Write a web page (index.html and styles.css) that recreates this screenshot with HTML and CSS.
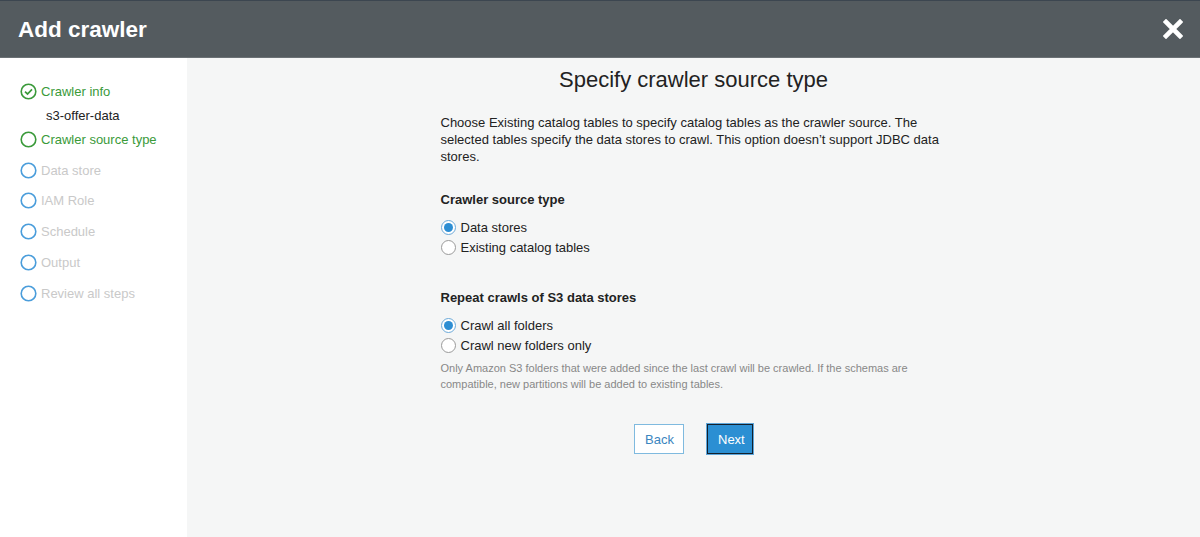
FILE: index.html
```html
<!DOCTYPE html>
<html lang="en">
<head>
    <meta charset="UTF-8">
    <title>Add crawler</title>
    <link rel="stylesheet" href="styles.css">
</head>
<body>
    <div class="modal">
        <div class="modal-header">
            <h1>Add crawler</h1>
            <button class="close-btn" aria-label="Close">
                <svg width="20" height="20" viewBox="0 0 20 20">
                    <path d="M3 3 L17 17 M17 3 L3 17" stroke="#fff" stroke-width="4.6" stroke-linecap="square"/>
                </svg>
            </button>
        </div>

        <div class="modal-body">
            <ul class="steps">
                <li class="step done">
                    <div class="step-row">
                        <svg class="step-icon" width="17" height="17" viewBox="0 0 17 17">
                            <circle cx="8.5" cy="8.5" r="7.3" fill="none" stroke="#3a9a3a" stroke-width="1.6"/>
                            <path d="M5 8.7 L7.5 11 L12 6.3" fill="none" stroke="#3a9a3a" stroke-width="1.7"/>
                        </svg>
                        <span>Crawler info</span>
                    </div>
                    <div class="step-sub">s3-offer-data</div>
                </li>
                <li class="step current">
                    <div class="step-row">
                        <svg class="step-icon" width="17" height="17" viewBox="0 0 17 17">
                            <circle cx="8.5" cy="8.5" r="7.3" fill="none" stroke="#3a9a3a" stroke-width="1.6"/>
                        </svg>
                        <span>Crawler source type</span>
                    </div>
                </li>
                <li class="step">
                    <div class="step-row">
                        <svg class="step-icon" width="17" height="17" viewBox="0 0 17 17"><circle cx="8.5" cy="8.5" r="7.3" fill="none" stroke="#4a9ddb" stroke-width="1.6"/></svg>
                        <span>Data store</span>
                    </div>
                </li>
                <li class="step">
                    <div class="step-row">
                        <svg class="step-icon" width="17" height="17" viewBox="0 0 17 17"><circle cx="8.5" cy="8.5" r="7.3" fill="none" stroke="#4a9ddb" stroke-width="1.6"/></svg>
                        <span>IAM Role</span>
                    </div>
                </li>
                <li class="step">
                    <div class="step-row">
                        <svg class="step-icon" width="17" height="17" viewBox="0 0 17 17"><circle cx="8.5" cy="8.5" r="7.3" fill="none" stroke="#4a9ddb" stroke-width="1.6"/></svg>
                        <span>Schedule</span>
                    </div>
                </li>
                <li class="step">
                    <div class="step-row">
                        <svg class="step-icon" width="17" height="17" viewBox="0 0 17 17"><circle cx="8.5" cy="8.5" r="7.3" fill="none" stroke="#4a9ddb" stroke-width="1.6"/></svg>
                        <span>Output</span>
                    </div>
                </li>
                <li class="step">
                    <div class="step-row">
                        <svg class="step-icon" width="17" height="17" viewBox="0 0 17 17"><circle cx="8.5" cy="8.5" r="7.3" fill="none" stroke="#4a9ddb" stroke-width="1.6"/></svg>
                        <span>Review all steps</span>
                    </div>
                </li>
            </ul>

            <div class="content">
                <h2>Specify crawler source type</h2>
                <div class="form">
                    <p class="intro">Choose Existing catalog tables to specify catalog tables as the crawler source. The selected tables specify the data stores to crawl. This option doesn’t support JDBC data stores.</p>

                    <div class="field">
                        <div class="field-label">Crawler source type</div>
                        <label class="radio"><span class="dot checked"></span>Data stores</label>
                        <label class="radio"><span class="dot"></span>Existing catalog tables</label>
                    </div>

                    <div class="field">
                        <div class="field-label">Repeat crawls of S3 data stores</div>
                        <label class="radio"><span class="dot checked"></span>Crawl all folders</label>
                        <label class="radio"><span class="dot"></span>Crawl new folders only</label>
                        <p class="help">Only Amazon S3 folders that were added since the last crawl will be crawled. If the schemas are compatible, new partitions will be added to existing tables.</p>
                    </div>

                    <div class="actions">
                        <button class="btn btn-back">Back</button>
                        <button class="btn btn-next">Next</button>
                    </div>
                </div>
            </div>
        </div>
    </div>
</body>
</html>
```

FILE: styles.css
```css
* {
    box-sizing: border-box;
}
html, body {
    margin: 0;
    height: 100%;
}
body {
    font-family: "Liberation Sans", Arial, sans-serif;
    color: #222;
    background: #f5f6f6;
}
.modal {
    height: 100%;
    display: flex;
    flex-direction: column;
}
.modal-header {
    height: 58px;
    background: #545b5f;
    border-top: 1px solid #3c4650;
    border-bottom: 1px solid #6b7175;
    display: flex;
    align-items: center;
    justify-content: space-between;
    padding: 0 17px 0 18px;
}
.modal-header h1 {
    margin: 0;
    padding-top: 2px;
    color: #fff;
    font-size: 22.5px;
    font-weight: bold;
}
.close-btn {
    background: none;
    border: none;
    padding: 0;
    width: 20px;
    height: 20px;
    cursor: pointer;
}
.modal-body {
    flex: 1;
    display: flex;
}
.steps {
    width: 187px;
    background: #fff;
    margin: 0;
    padding: 21px 0 0 20px;
    list-style: none;
    display: flex;
    flex-direction: column;
    gap: 6.75px;
}
.step-row {
    height: 24px;
    display: flex;
    align-items: center;
    gap: 4px;
    font-size: 13px;
    color: #c9c9c9;
}
.step.done .step-row,
.step.current .step-row {
    color: #3a9a3a;
}
.step-icon {
    flex: none;
}
.step-sub {
    font-size: 13px;
    line-height: 17px;
    padding: 4px 0 0 26px;
    margin-bottom: -3.5px;
    color: #222;
}
.content {
    flex: 1;
    padding-top: 8px;
    display: flex;
    flex-direction: column;
    align-items: center;
}
h2 {
    margin: 0;
    font-size: 22px;
    font-weight: normal;
    line-height: 28px;
    color: #222;
}
.form {
    width: 506px;
}
.intro {
    margin: 20px 0 0;
    font-size: 13px;
    line-height: 17px;
}
.field {
    margin-top: 26px;
}
.field + .field {
    margin-top: 32px;
}
.field-label {
    font-size: 13px;
    font-weight: bold;
    line-height: 17px;
    margin-bottom: 9px;
}
.radio {
    display: flex;
    align-items: center;
    height: 20px;
    font-size: 13px;
}
.dot {
    width: 15px;
    height: 15px;
    border-radius: 50%;
    border: 1px solid #9a9a9a;
    background: #fff;
    margin-right: 5px;
    display: flex;
    align-items: center;
    justify-content: center;
}
.dot.checked {
    border-color: #6ba9d8;
}
.dot.checked::after {
    content: "";
    width: 9px;
    height: 9px;
    border-radius: 50%;
    background: #2d8ed3;
}
.help {
    margin: 5px 0 0;
    font-size: 11px;
    line-height: 16px;
    color: #888;
}
.actions {
    margin-top: 32px;
    display: flex;
    justify-content: center;
    gap: 23px;
}
.btn {
    font-family: inherit;
    font-size: 13px;
    height: 30px;
    padding: 0 10px;
    cursor: pointer;
}
.btn-back {
    background: #fff;
    color: #3b86c0;
    border: 1px solid #7fbadf;
    width: 50px;
}
.btn-next {
    background: #2b8fd3;
    color: #fff;
    border: 1px solid #14202b;
    box-shadow: 0 0 0 1px #5ea6da;
    width: 46px;
}
```
